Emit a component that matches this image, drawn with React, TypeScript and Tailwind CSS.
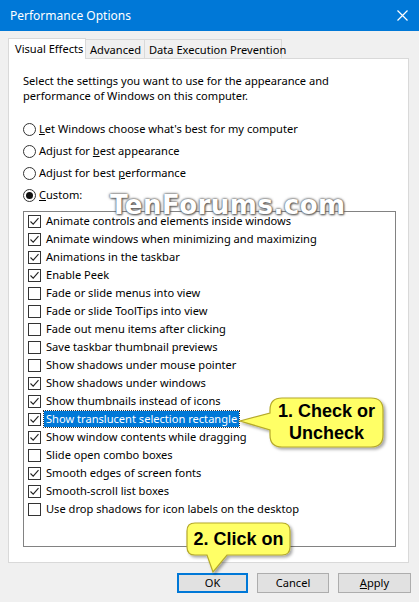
import React from "react";

const items: { label: string; checked: boolean; selected?: boolean }[] = [
  { label: "Animate controls and elements inside windows", checked: true },
  { label: "Animate windows when minimizing and maximizing", checked: true },
  { label: "Animations in the taskbar", checked: true },
  { label: "Enable Peek", checked: true },
  { label: "Fade or slide menus into view", checked: false },
  { label: "Fade or slide ToolTips into view", checked: false },
  { label: "Fade out menu items after clicking", checked: false },
  { label: "Save taskbar thumbnail previews", checked: false },
  { label: "Show shadows under mouse pointer", checked: false },
  { label: "Show shadows under windows", checked: true },
  { label: "Show thumbnails instead of icons", checked: true },
  { label: "Show translucent selection rectangle", checked: true, selected: true },
  { label: "Show window contents while dragging", checked: true },
  { label: "Slide open combo boxes", checked: false },
  { label: "Smooth edges of screen fonts", checked: true },
  { label: "Smooth-scroll list boxes", checked: true },
  { label: "Use drop shadows for icon labels on the desktop", checked: false },
];

const CheckBox = ({ checked }: { checked: boolean }) => (
  <div className="w-[13px] h-[13px] border border-[#333333] bg-white flex items-center justify-center shrink-0">
    {checked && (
      <svg width="11" height="11" viewBox="0 0 11 11">
        <path d="M1.5 5.5 L4.2 8.2 L9.5 2.2" fill="none" stroke="#222" strokeWidth="1.1" />
      </svg>
    )}
  </div>
);

const Radio = ({ on }: { on?: boolean }) => (
  <div className="w-[13px] h-[13px] rounded-full border border-[#333333] bg-white flex items-center justify-center shrink-0">
    {on && <div className="w-[7px] h-[7px] rounded-full bg-[#111]" />}
  </div>
);

const RadioRow = ({ on, children }: { on?: boolean; children: React.ReactNode }) => (
  <div className="flex items-center gap-[3px] h-[22px]">
    <Radio on={on} />
    <span>{children}</span>
  </div>
);

export default function App() {
  return (
    <div
      className="relative w-[419px] h-[602px] overflow-hidden bg-[#f0f0f0] text-[11.1px] text-black"
      style={{ fontFamily: '"Noto Sans", sans-serif' }}
    >
      {/* title bar */}
      <div className="h-[31px] bg-[#0078d7] flex items-center justify-between pl-[10px] pr-[11px] text-white">
        <span className="text-[12px]">Performance Options</span>
        <svg width="11" height="11" viewBox="0 0 11 11">
          <path d="M0.5 0.5 L10.5 10.5 M10.5 0.5 L0.5 10.5" stroke="#fff" strokeWidth="1.2" />
        </svg>
      </div>

      {/* tabs */}
      <div className="flex items-end h-[27px] pl-[8px] whitespace-nowrap">
        <div className="h-[21px] w-[78px] bg-white border border-b-0 border-[#d9d9d9] pl-[6px] leading-[19px] relative top-[1px]">
          Visual Effects
        </div>
        <div className="h-[19px] w-[59px] bg-[#f0f0f0] border border-l-0 border-b-0 border-[#d9d9d9] pl-[4px] leading-[20px]">
          Advanced
        </div>
        <div className="h-[19px] w-[137px] bg-[#f0f0f0] border border-l-0 border-b-0 border-[#d9d9d9] pl-[4px] leading-[20px]">
          Data Execution Prevention
        </div>
      </div>

      {/* panel */}
      <div className="ml-[8px] w-[401px] h-[505px] bg-white border border-[#d9d9d9] pl-[14px] pt-[14px]">
        <p className="leading-[15px]">
          Select the settings you want to use for the appearance and
          <br />
          performance of Windows on this computer.
        </p>
        <div className="mt-[15px] flex flex-col">
          <RadioRow>
            <u>L</u>et Windows choose what's best for my computer
          </RadioRow>
          <RadioRow>
            Adjust for <u>b</u>est appearance
          </RadioRow>
          <RadioRow>
            Adjust for best <u>p</u>erformance
          </RadioRow>
          <RadioRow on>
            <u>C</u>ustom:
          </RadioRow>
        </div>
        <div className="mt-[5px] w-[373px] h-[336px] border border-[#828282] pl-[4px]">
          {items.map((it) => (
            <div key={it.label} className="flex items-center h-[18px] gap-[3px]">
              <CheckBox checked={it.checked} />
              <span
                className={
                  it.selected
                    ? "bg-[#0078d7] text-white px-[2px] leading-[16px] outline outline-1 outline-dotted outline-[#333]"
                    : "px-[2px]"
                }
              >
                {it.label}
              </span>
            </div>
          ))}
        </div>
      </div>

      {/* buttons */}
      <div className="flex justify-end gap-[9px] pr-[8px] mt-[10px]">
        <button className="w-[71px] h-[20px] bg-[#e1e1e1] border-2 border-[#0078d7] leading-[16px]">OK</button>
        <button className="w-[72px] h-[20px] bg-[#e1e1e1] border border-[#adadad]">Cancel</button>
        <button className="w-[73px] h-[20px] bg-[#e1e1e1] border border-[#adadad]">
          <u>A</u>pply
        </button>
      </div>

      {/* watermark */}
      <div
        className="absolute left-[110px] top-[186px] text-[26px] font-bold text-white tracking-[0.5px]"
        style={{
          fontFamily: '"DejaVu Sans", sans-serif',
          textShadow: "0 0 3px #555, 0 0 2px #777, 1px 1px 2px #666",
        }}
      >
        TenForums.com
      </div>

      {/* callout 1 */}
      <svg className="absolute left-[236px] top-[394px]" width="156" height="60" viewBox="0 0 156 60">
        <defs>
          <filter id="s1" x="-10%" y="-10%" width="130%" height="130%">
            <feDropShadow dx="2" dy="2" stdDeviation="1.5" floodColor="#000" floodOpacity="0.35" />
          </filter>
        </defs>
        <path
          d="M46 4 H135 Q147 4 147 16 V41 Q147 53 135 53 H46 Q34 53 34 41 V36 L4 27 L34 19 V16 Q34 4 46 4 Z"
          fill="#ffff66"
          stroke="#b5a92a"
          strokeWidth="1.2"
          filter="url(#s1)"
        />
      </svg>
      <div
        className="absolute left-[270px] top-[400px] w-[113px] text-center font-bold text-[18px] leading-[22px]"
        style={{ fontFamily: '"Liberation Sans", Arial, sans-serif' }}
      >
        1. Check or
        <br />
        Uncheck
      </div>

      {/* callout 2 */}
      <svg className="absolute left-[181px] top-[519px]" width="116" height="58" viewBox="0 0 116 58">
        <defs>
          <filter id="s2" x="-10%" y="-10%" width="130%" height="130%">
            <feDropShadow dx="2" dy="2" stdDeviation="1.5" floodColor="#000" floodOpacity="0.35" />
          </filter>
        </defs>
        <path
          d="M14 4 H101 Q109 4 109 12 V28 Q109 36 101 36 H46 L32 53 L26 36 H14 Q6 36 6 28 V12 Q6 4 14 4 Z"
          fill="#ffff66"
          stroke="#b5a92a"
          strokeWidth="1.2"
          filter="url(#s2)"
        />
      </svg>
      <div
        className="absolute left-[187px] top-[528px] w-[103px] text-center font-bold text-[18px] leading-[22px]"
        style={{ fontFamily: '"Liberation Sans", Arial, sans-serif' }}
      >
        2. Click on
      </div>
    </div>
  );
}
